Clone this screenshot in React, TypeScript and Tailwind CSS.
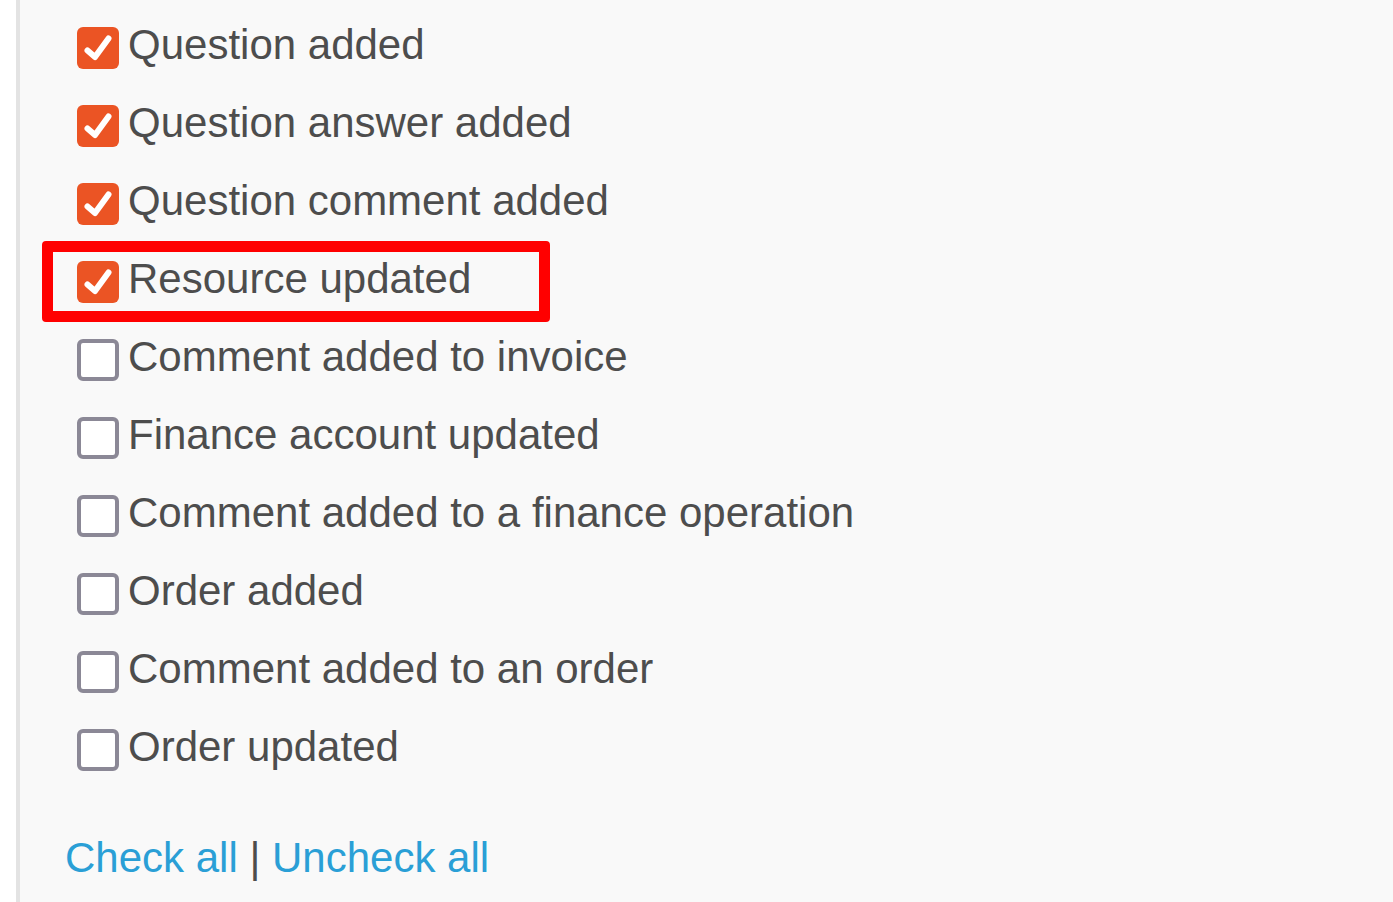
import React from "react";

const items = [
  { text: "Question added", checked: true },
  { text: "Question answer added", checked: true },
  { text: "Question comment added", checked: true },
  { text: "Resource updated", checked: true, highlight: true },
  { text: "Comment added to invoice", checked: false },
  { text: "Finance account updated", checked: false },
  { text: "Comment added to a finance operation", checked: false },
  { text: "Order added", checked: false },
  { text: "Comment added to an order", checked: false },
  { text: "Order updated", checked: false },
];

const Box = ({ checked }: { checked: boolean }) =>
  checked ? (
    <span className="flex h-[42px] w-[42px] shrink-0 items-center justify-center rounded-[6px] bg-[#eb5424]">
      <svg viewBox="0 0 42 42" className="h-[42px] w-[42px]">
        <path
          d="M10.5 23.5 L18 30 L31.5 11.5"
          fill="none"
          stroke="#fff"
          strokeWidth="6"
          strokeLinecap="round"
          strokeLinejoin="round"
        />
      </svg>
    </span>
  ) : (
    <span className="h-[42px] w-[42px] shrink-0 rounded-[6px] border-[4px] border-[#8b8896] bg-white" />
  );

export default function App() {
  return (
    <div className="flex h-[902px] w-full overflow-hidden bg-white font-['Liberation_Sans',Arial,sans-serif]">
      <div className="w-[16px] shrink-0 bg-white" />
      <div className="flex-1 border-l-[4px] border-[#e3e3e3] bg-[#f9f9f9] pl-[57px] pt-[9px]">
        <ul className="flex flex-col">
          {items.map((item, i) => (
            <li key={i} className="relative flex h-[78px] items-center">
              <Box checked={item.checked} />
              <span className="ml-[9px] pb-[6px] text-[42px] leading-none text-[#4d4d4d]">
                {item.text}
              </span>
              {item.highlight && (
                <span className="pointer-events-none absolute left-[-35px] top-[-2px] h-[81px] w-[508px] rounded-[4px] border-[11px] border-[#ff0000]" />
              )}
            </li>
          ))}
        </ul>
        <div className="ml-[-12px] mt-[44px] text-[42px] leading-[50px] text-[#4d4d4d]">
          <a href="#" className="text-[#2a9fd6]">
            Check all
          </a>{" "}
          |{" "}
          <a href="#" className="text-[#2a9fd6]">
            Uncheck all
          </a>
        </div>
      </div>
    </div>
  );
}
